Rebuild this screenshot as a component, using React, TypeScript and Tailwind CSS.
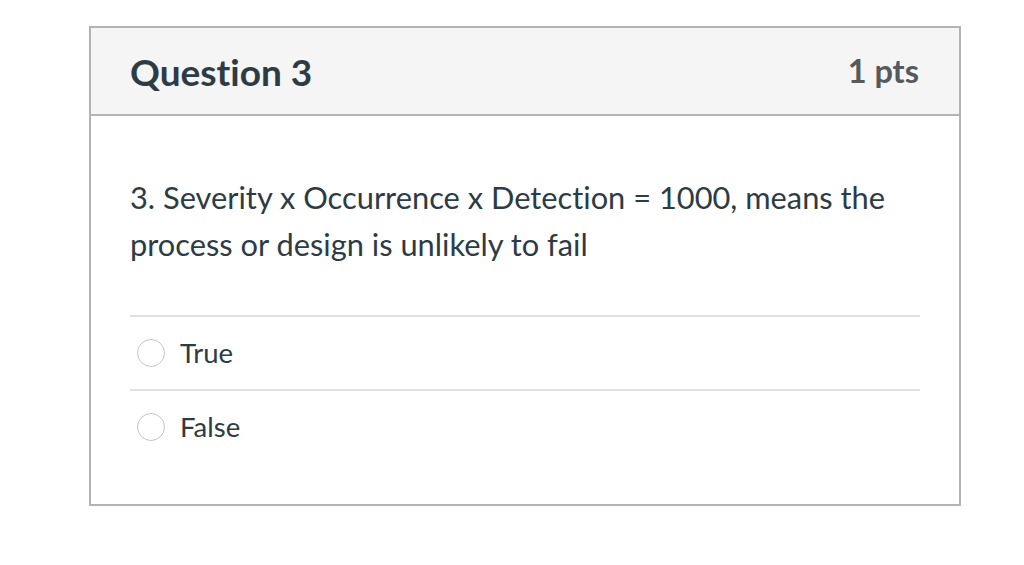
export default function App() {
  const answers = ['True', 'False'];

  return (
    <div
      className="min-h-[565px] w-[1024px] bg-white pt-[26px] pl-[89px] [font-variant-ligatures:none]"
      style={{ fontFamily: 'Lato, "Open Sans", sans-serif' }}
    >
      <div className="w-[872px] border-2 border-[#b3b3b3] bg-white">
        <header className="flex h-[88px] items-center justify-between border-b-2 border-[#b3b3b3] bg-[#f5f5f5] pr-[40px] pl-[39px]">
          <h2 className="text-[37px] leading-none font-bold text-[#2d3b45]">Question 3</h2>
          <div className="text-[32.5px] leading-none font-bold text-[#565a5c]">1 pts</div>
        </header>

        <div className="px-[39px] pt-[58px] pb-[41px]">
          <p className="text-[30.8px] leading-[47px] text-[#2d3b45]">
            3. Severity x Occurrence x Detection = 1000, means the process or design is unlikely to fail
          </p>

          <div className="mt-[47px]">
            {answers.map((a) => (
              <label key={a} className="flex h-[74px] items-center border-t-2 border-[#e0e0e0] pl-[7px]">
                <span className="h-[28px] w-[28px] shrink-0 rounded-full border-[1.5px] border-[#c4c4c4] bg-white" />
                <span className="ml-[15px] text-[27.5px] leading-none text-[#2d3b45]">{a}</span>
              </label>
            ))}
          </div>
        </div>
      </div>
    </div>
  );
}
